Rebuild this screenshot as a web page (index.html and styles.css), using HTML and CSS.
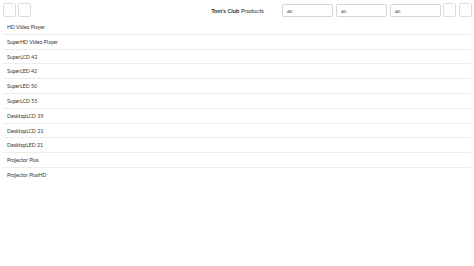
FILE: index.html
```html
<!DOCTYPE html>
<html>
<head>
<meta charset="utf-8">
<link rel="stylesheet" href="styles.css">
</head>
<body>
<div class="topbar">
  <div class="left">
    <div class="btn"></div>
    <div class="btn"></div>
  </div>
  <div class="title"><b>Tom's Club</b> Products</div>
  <div class="right">
    <div class="selects">
      <div class="select">All</div>
      <div class="select">All</div>
      <div class="select">All</div>
    </div>
    <div class="btns">
      <div class="btn"></div>
      <div class="btn"></div>
    </div>
  </div>
</div>
<ul class="list">
  <li>HD Video Player</li>
  <li>SuperHD Video Player</li>
  <li>SuperLCD 42</li>
  <li>SuperLED 42</li>
  <li>SuperLED 50</li>
  <li>SuperLCD 55</li>
  <li>DesktopLCD 19</li>
  <li>DesktopLCD 21</li>
  <li>DesktopLED 21</li>
  <li>Projector Plus</li>
  <li>Projector PlusHD</li>
</ul>
</body>
</html>
```
FILE: styles.css
```css
html, body {
  margin: 0;
  padding: 0;
  background: #ffffff;
  font-family: Lato, "Open Sans", sans-serif;
  color: #333333;
}
.topbar {
  display: grid;
  grid-template-columns: 1fr auto 1fr;
  align-items: center;
  height: 20px;
  padding: 0 2px 0 3px;
}
.left, .right, .selects, .btns {
  display: flex;
  align-items: center;
}
.left { gap: 2px; }
.right {
  justify-content: flex-end;
  gap: 2px;
}
.selects, .btns { gap: 3px; }
.btn {
  width: 13px;
  height: 14px;
  box-sizing: border-box;
  border: 0.5px solid #dcdcdc;
  border-radius: 1.5px;
  background: #fff;
}
.title {
  font-size: 5.9px;
  color: #333;
  text-align: center;
  white-space: nowrap;
}
.title b { font-weight: 700; }
.select {
  width: 51px;
  height: 13px;
  box-sizing: border-box;
  border: 0.5px solid #d6d6d6;
  border-radius: 1.5px;
  padding-left: 4px;
  font-size: 4.6px;
  line-height: 12px;
  color: #444;
}
.list {
  list-style: none;
  margin: 0;
  padding: 0 3px;
}
.list li {
  height: 14.8px;
  line-height: 14.8px;
  padding-left: 4px;
  font-size: 5.2px;
  color: #333;
  border-bottom: 1px solid #ececec;
  box-sizing: border-box;
}
.list li:last-child { border-bottom: none; }
```
